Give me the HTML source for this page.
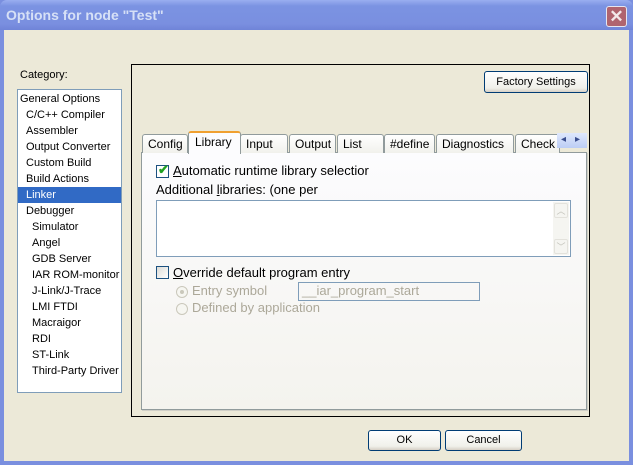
<!DOCTYPE html>
<html><head><style>
*{margin:0;padding:0;box-sizing:border-box}
body{width:633px;height:465px;overflow:hidden;background:#7a8fdf;font-family:"Liberation Sans",sans-serif;position:relative}
.a{position:absolute;white-space:nowrap}
.t13{font-size:13px;color:#000}
.t11{font-size:11px;color:#000}
.btn{position:absolute;border:1px solid #003c74;border-radius:3px;background:linear-gradient(#fff,#f0f0ea 80%,#d6d0c5);font-size:11px;text-align:center;color:#000}
.tab{position:absolute;top:134px;height:19px;border:1px solid #919b9c;border-bottom:none;border-radius:3px 3px 0 0;background:linear-gradient(#fff,#f1f1ec);font-size:12px;padding-left:5px;line-height:18px;overflow:hidden}
.li{position:absolute;left:20px;font-size:11px;height:16px;line-height:16px}
.cb{position:absolute;width:13px;height:13px;border:1px solid #1c5180;background:linear-gradient(135deg,#dcdcd7,#fff)}
</style></head><body>
<div class="a" style="left:0;top:0;width:633px;height:30px;background:linear-gradient(#9aaef0,#7b93e2 20%,#7a8fe0 80%,#6f84d8);border-radius:7px 7px 0 0"></div>
<div class="a" style="left:6px;top:7px;font-size:14px;font-weight:bold;color:#d6e0f6">Options for node "Test"</div>
<div class="a" style="left:606px;top:6px;width:21px;height:21px;border:1px solid #e6e6f0;border-radius:3px;background:#b0646f;color:#f3e8ea;font-size:17px;font-weight:bold;text-align:center;line-height:19px">✕</div>
<div class="a" style="left:4px;top:30px;width:625px;height:431px;background:#ece9d8"></div>
<div class="a t11" style="left:20px;top:69px">Category:</div>
<div class="a" style="left:17px;top:89px;width:105px;height:304px;background:#fff;border:1px solid #7f9db9"></div>
<div class="li" style="top:91px">General Options</div>
<div class="li" style="left:26px;top:107px">C/C++ Compiler</div>
<div class="li" style="left:26px;top:123px">Assembler</div>
<div class="li" style="left:26px;top:139px">Output Converter</div>
<div class="li" style="left:26px;top:155px">Custom Build</div>
<div class="li" style="left:26px;top:171px">Build Actions</div>
<div class="a" style="left:18px;top:187px;width:103px;height:16px;background:#316ac5"></div>
<div class="li" style="left:26px;top:187px;color:#fff">Linker</div>
<div class="li" style="left:26px;top:203px">Debugger</div>
<div class="li" style="left:32px;top:219px">Simulator</div>
<div class="li" style="left:32px;top:235px">Angel</div>
<div class="li" style="left:32px;top:251px">GDB Server</div>
<div class="li" style="left:32px;top:267px">IAR ROM-monitor</div>
<div class="li" style="left:32px;top:283px">J-Link/J-Trace</div>
<div class="li" style="left:32px;top:299px">LMI FTDI</div>
<div class="li" style="left:32px;top:315px">Macraigor</div>
<div class="li" style="left:32px;top:331px">RDI</div>
<div class="li" style="left:32px;top:347px">ST-Link</div>
<div class="li" style="left:32px;top:363px">Third-Party Driver</div>

<div class="a" style="left:131px;top:64px;width:459px;height:353px;border:1px solid #000"></div>
<div class="btn" style="left:484px;top:71px;width:104px;height:22px;line-height:20px">Factory Settings</div>

<div class="a" style="left:141px;top:152px;width:446px;height:258px;border:1px solid #919b9c;background:linear-gradient(#fcfcfe,#f4f3ee);box-shadow:1px 1px 0 #d0cfc7"></div>
<div class="tab" style="left:142px;width:46px">Config</div>
<div class="tab" style="left:240px;width:48px">Input</div>
<div class="tab" style="left:289px;width:47px">Output</div>
<div class="tab" style="left:337px;width:47px">List</div>
<div class="tab" style="left:384px;width:51px">#define</div>
<div class="tab" style="left:436px;width:78px">Diagnostics</div>
<div class="tab" style="left:515px;width:45px">Check</div>
<div class="tab" style="left:188px;top:131px;width:53px;height:23px;background:#fcfcfe;border-top:2px solid #f0a030;line-height:18px;padding-left:6px;z-index:2">Library</div>
<div class="a" style="left:557px;top:133px;width:30px;height:15px;background:linear-gradient(#dfe8fc,#bccdf5);z-index:3"></div>
<div class="a" style="left:561px;top:133px;font-size:10px;color:#3b4e8e;line-height:14px;z-index:4">◂</div>
<div class="a" style="left:575px;top:133px;font-size:10px;color:#3b4e8e;line-height:14px;z-index:4">▸</div>

<div class="cb" style="left:156px;top:165px;background:#fff"><div style="position:absolute;left:1px;top:-4px;color:#21a121;font-size:13px;font-weight:bold">✔</div></div>
<div class="a t13" style="left:173px;top:163px"><u>A</u>utomatic runtime library selectior</div>
<div class="a t13" style="left:156px;top:182px">Additional <u>l</u>ibraries: (one per</div>
<div class="a" style="left:156px;top:200px;width:415px;height:57px;border:1px solid #7f9db9;background:#fff"></div>
<div class="a" style="left:553px;top:202px;width:16px;height:53px;background:#f5f5f1"></div>
<div class="a" style="left:554px;top:203px;width:14px;height:15px;border:1px solid #e3e2dc;border-radius:2px;color:#c3c3bb;font-size:9px;text-align:center">︿</div>
<div class="a" style="left:554px;top:239px;width:14px;height:15px;border:1px solid #e3e2dc;border-radius:2px;color:#c3c3bb;font-size:9px;text-align:center">﹀</div>

<div class="cb" style="left:156px;top:266px"></div>
<div class="a t13" style="left:173px;top:265px"><u>O</u>verride default program entry</div>
<div class="a" style="left:176px;top:286px;width:12px;height:12px;border:1px solid #cac8bb;border-radius:50%;background:#f6f6f1"><div style="position:absolute;left:3px;top:3px;width:4px;height:4px;border-radius:50%;background:#cac8bb"></div></div>
<div class="a t13" style="left:192px;top:283px;color:#aca899">Entry symbol</div>
<div class="a" style="left:298px;top:282px;width:182px;height:19px;border:1px solid #7f9db9;font-size:13px;color:#aca899;padding-left:3px;line-height:16px">__iar_program_start</div>
<div class="a" style="left:176px;top:303px;width:12px;height:12px;border:1px solid #cac8bb;border-radius:50%;background:#f6f6f1"></div>
<div class="a t13" style="left:192px;top:300px;color:#aca899">Defined by application</div>

<div class="btn" style="left:368px;top:430px;width:73px;height:21px;line-height:19px">OK</div>
<div class="btn" style="left:445px;top:430px;width:77px;height:21px;line-height:19px">Cancel</div>
</body></html>
